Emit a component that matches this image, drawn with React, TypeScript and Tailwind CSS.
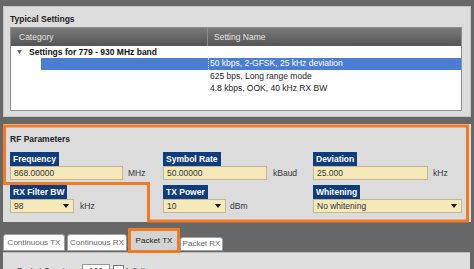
import React from 'react'

/** SmartRF-style settings screen: typical settings table, RF parameters and tab strip. */

const ORANGE = '#f37a22'

function FieldLabel({ text }: { text: string }): JSX.Element {
  return (
    <div className="inline-block h-[14px] whitespace-nowrap bg-[#0f3c7c] px-[3px] text-[8.5px] font-bold leading-[14px] text-white">
      {text}
    </div>
  )
}

function TextInput({ value, width }: { value: string; width: string }): JSX.Element {
  return (
    <div
      className={`${width} h-[14px] border border-[#c2b994] bg-[#f5e9ba] pl-[3px] text-[8.5px] leading-[12px] text-[#333]`}
    >
      {value}
    </div>
  )
}

function SelectBox({ value, width }: { value: string; width: string }): JSX.Element {
  return (
    <div
      className={`${width} flex h-[14px] items-center justify-between border border-[#c2b994] bg-[#f5e9ba] pl-[3px] pr-[4px] text-[8.5px] text-[#333]`}
    >
      <span>{value}</span>
      <svg width="6" height="4" viewBox="0 0 6 4">
        <path d="M0 0 H6 L3 4 Z" fill="#111" />
      </svg>
    </div>
  )
}

function Unit({ text, ml }: { text: string; ml: string }): JSX.Element {
  return <span className={`${ml} text-[8.5px] text-[#333]`}>{text}</span>
}

export default function App(): JSX.Element {
  return (
    <div className="relative h-[269px] w-[474px] overflow-hidden bg-[#676767] px-[3px] pt-[6px] font-['Liberation_Sans',Arial,sans-serif] text-[8px] text-[#222]">
      {/* Typical Settings */}
      <section className="h-[111px] w-[468px] border border-[#c4c4c4] bg-[#dcdcdc] px-[6px]">
        <h2 className="h-[20px] pt-[7px] text-[8.5px] font-bold leading-[10px] text-[#222]">Typical Settings</h2>
        <div className="h-[84px] w-[452px] border border-[#8e8e8e] bg-white text-[8.5px]">
          <div className="flex h-[18px] items-center bg-linear-to-b from-[#7a7a7a] to-[#545454] text-[#e4e4e4]">
            <div className="flex h-full w-[197px] items-center border-r border-[#8a8a8a] pl-[8px]">Category</div>
            <div className="pl-[6px]">Setting Name</div>
          </div>
          <div className="flex h-[12px] items-center pl-[6px]">
            <svg width="5" height="4" viewBox="0 0 5 4" className="mr-[7px]">
              <path d="M0 0 H5 L2.5 4 Z" fill="#6a6a6a" />
            </svg>
            <span className="font-bold text-[#111]">Settings for 779 - 930 MHz band</span>
          </div>
          <div className="ml-[30px] flex h-[12px] items-center bg-[#4a7ed2] text-white">
            <div className="w-[167px]" />
            <div className="h-full border-l border-dotted border-white/70 pl-[1px] leading-[11px]">
              50 kbps, 2-GFSK, 25 kHz deviation
            </div>
          </div>
          <div className="flex h-[12px] items-center pl-[199px] text-[#222]">625 bps, Long range mode</div>
          <div className="flex h-[12px] items-center pl-[199px] text-[#222]">4.8 kbps, OOK, 40 kHz RX BW</div>
        </div>
      </section>

      {/* RF Parameters */}
      <section className="mt-[7px] h-[98px] w-[468px] bg-[#dcdcdc] px-[7px]">
        <h2 className="h-[28px] pt-[10px] text-[8.5px] font-bold leading-[10px] text-[#222]">RF Parameters</h2>
        <div className="flex">
          <div className="w-[153px]">
            <FieldLabel text="Frequency" />
            <div className="flex items-center">
              <TextInput value="868.00000" width="w-[113px]" />
              <Unit text="MHz" ml="ml-[5px]" />
            </div>
            <div className="mt-[5px]">
              <FieldLabel text="RX Filter BW" />
            </div>
            <div className="flex items-center">
              <SelectBox value="98" width="w-[64px]" />
              <Unit text="kHz" ml="ml-[6px]" />
            </div>
          </div>
          <div className="w-[150px]">
            <FieldLabel text="Symbol Rate" />
            <div className="flex items-center">
              <TextInput value="50.00000" width="w-[104px]" />
              <Unit text="kBaud" ml="ml-[6px]" />
            </div>
            <div className="mt-[5px]">
              <FieldLabel text="TX Power" />
            </div>
            <div className="flex items-center">
              <SelectBox value="10" width="w-[63px]" />
              <Unit text="dBm" ml="ml-[4px]" />
            </div>
          </div>
          <div className="flex-1">
            <FieldLabel text="Deviation" />
            <div className="flex items-center">
              <TextInput value="25.000" width="w-[115px]" />
              <Unit text="kHz" ml="ml-[5px]" />
            </div>
            <div className="mt-[5px]">
              <FieldLabel text="Whitening" />
            </div>
            <div className="flex items-center">
              <SelectBox value="No whitening" width="w-[149px]" />
            </div>
          </div>
        </div>
      </section>

      {/* Tabs */}
      <div className="mt-[6px] flex h-[24px] items-end">
        <div className="mb-[1px] flex h-[17px] w-[62px] items-center justify-center rounded-t-[3px] border border-[#a0a0a0] bg-white text-[#666]">
          Continuous TX
        </div>
        <div className="mb-[1px] ml-[2px] flex h-[17px] w-[60px] items-center justify-center rounded-t-[3px] border border-[#a0a0a0] bg-white text-[#666]">
          Continuous RX
        </div>
        <div
          className="relative z-10 -mb-[1px] ml-[1px] flex h-[25px] w-[52px] items-center justify-center border-[3px] bg-[#d3d3d3] text-[#222]"
          style={{ borderColor: ORANGE }}
        >
          Packet TX
        </div>
        <div className="mb-[1px] flex h-[14px] w-[43px] items-center justify-center rounded-t-[3px] border border-[#a0a0a0] bg-white text-[#666]">
          Packet RX
        </div>
      </div>
      <section className="h-[40px] w-[467px] border-t border-[#bcbcbc] bg-[#dfdfdf] pt-[11px]">
        <div className="flex items-center">
          <span className="ml-[14px] w-[65px] text-[#222]">Packet Count:</span>
          <div className="h-[13px] w-[28px] border border-[#9a9a9a] bg-white text-center text-[8px] leading-[11px]">100</div>
          <div className="ml-[3px] h-[11px] w-[11px] border border-[#777] bg-white" />
          <span className="ml-[2px]">Infinite</span>
        </div>
      </section>

      {/* orange annotation around the RF parameters */}
      <svg className="pointer-events-none absolute left-0 top-0" width="474" height="269">
        <path
          d="M4.5 126 H467.5 V221 H148.5 V183.5 H4.5 Z"
          fill="none"
          stroke={ORANGE}
          strokeWidth="3"
        />
      </svg>
    </div>
  )
}
